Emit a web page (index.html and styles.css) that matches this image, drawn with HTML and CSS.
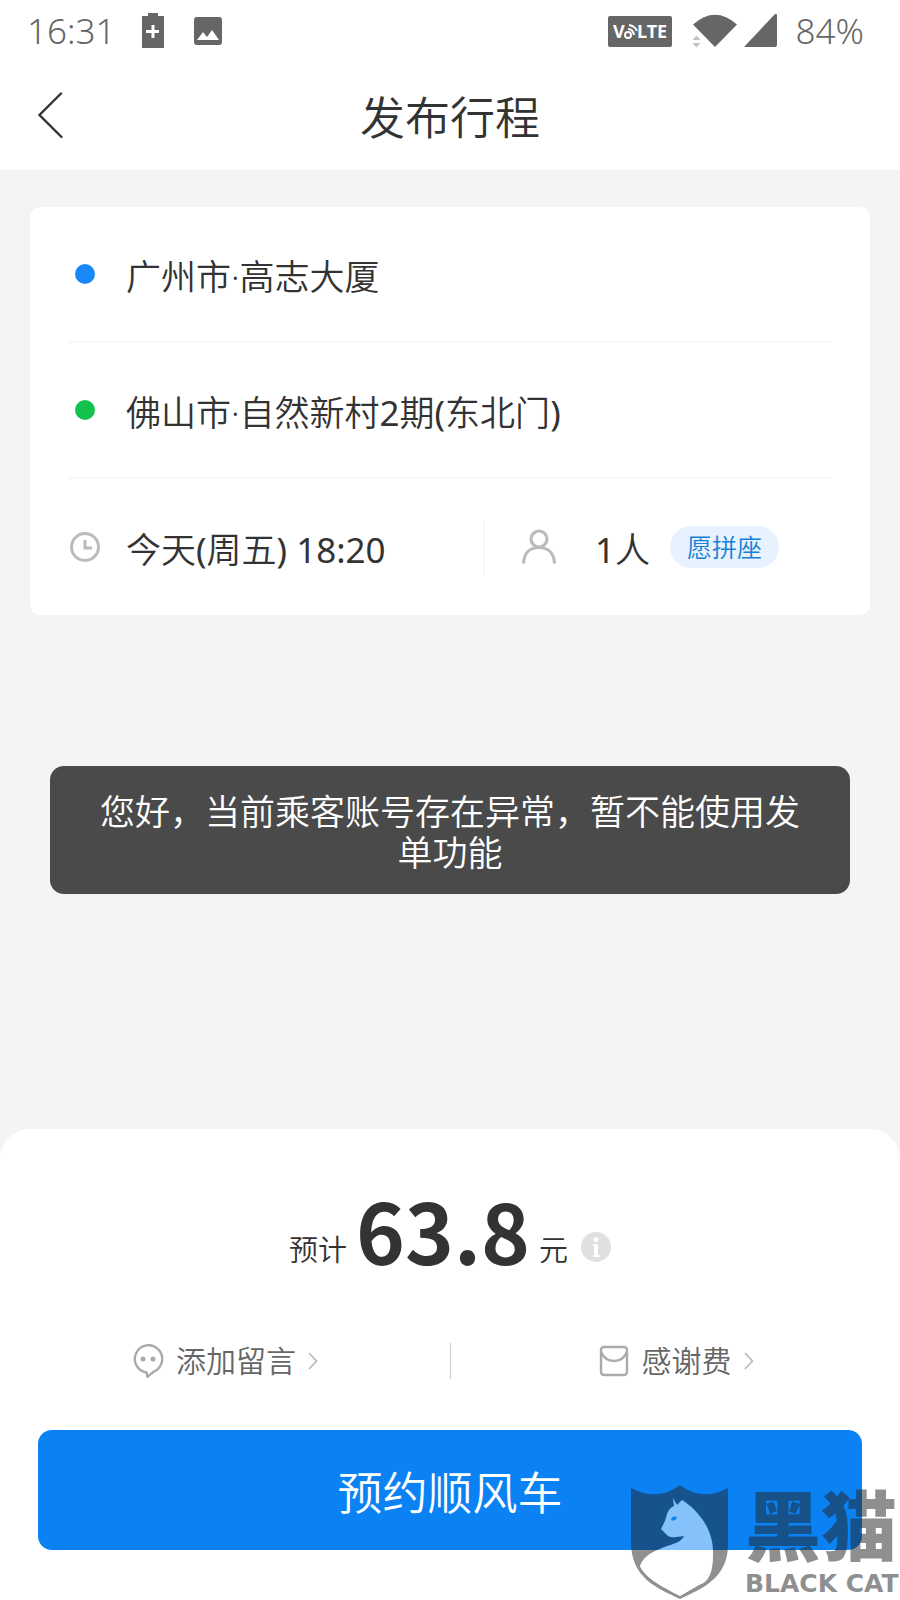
FILE: index.html
```html
<!DOCTYPE html>
<html lang="zh-CN">
<head>
<meta charset="utf-8">
<meta name="viewport" content="width=device-width, initial-scale=1">
<title>发布行程</title>
<link rel="stylesheet" href="styles.css">
</head>
<body>
<div class="page">
  <div class="status">
    <span class="status-time">16:31</span>
    <svg class="icon-battery" width="24" height="36" viewBox="0 0 24 36" aria-hidden="true"><path fill="#666" d="M7 0h10v3h6v32H1V3h6z"/><path stroke="#fff" stroke-width="3" d="M12 12v13M5 18.500h13"/></svg>
    <svg class="icon-image" width="30" height="30" viewBox="0 0 30 30" aria-hidden="true"><rect x="1" y="1" width="28" height="28" rx="3" fill="#666"/><path fill="#fff" d="M4 24l6-8 4 5 5-7 7 10z"/></svg>
    <svg class="icon-volte" width="64" height="31" viewBox="0 0 64 31" role="img" aria-label="VoLTE"><rect width="64" height="31" rx="2" fill="#666"/><g fill="#fff" class="volte-text"><text x="5" y="22">V</text><text x="29" y="22">LTE</text></g><g fill="none" stroke="#fff" stroke-width="2"><circle cx="20" cy="19" r="3"/><path d="M20 13q5 0 6 6M21 9q6 1 8 6"/></g></svg>
    <svg class="icon-wifi" width="46" height="34" viewBox="0 0 46 34" aria-hidden="true"><path fill="#666" d="M1 10.500Q23-9 45 10.500L23 33z"/><path fill="#c4c4c4" stroke="#fff" stroke-width="1" d="M-.5 26.500L4.500 21l5 5.500zM-.5 28.500h10l-5 5.500z"/></svg>
    <svg class="icon-signal" width="34" height="34" viewBox="0 0 34 34" aria-hidden="true"><path fill="#666" d="M0 33L30 1q3-3 3 1v29q0 2-2 2z"/></svg>
    <span>84%</span>
  </div>
  <header class="header">
    <button class="back" type="button" aria-label="返回"><svg width="28" height="50" viewBox="0 0 28 50" aria-hidden="true"><path d="M25 3.500L3.500 25 25.500 47" fill="none" stroke="#333" stroke-width="2.400" stroke-linecap="round"/></svg></button>
    <h1 class="title">发布行程</h1>
  </header>
  <main class="main">
    <section class="card">
      <div class="row"><span class="lead"><i class="dot dot-start"></i></span><span>广州市·高志大厦</span></div>
      <div class="row"><span class="lead"><i class="dot dot-end"></i></span><span>佛山市·自然新村<span class="latin">2</span>期<span class="latin">(</span>东北门<span class="latin">)</span></span></div>
      <div class="row">
        <div class="when">
          <span class="lead"><svg width="32" height="32" viewBox="0 0 32 32" aria-hidden="true"><g fill="none" stroke="#bbb" stroke-width="3"><circle cx="16" cy="16" r="13.500"/><path d="M16 9v8h7"/></g></svg></span>
          <span>今天<span class="latin">(</span>周五<span class="latin">) 18:20</span></span>
        </div>
        <div class="who">
          <svg width="36" height="36" viewBox="0 0 36 36" aria-hidden="true"><g fill="none" stroke="#bbb" stroke-width="3.200"><circle cx="18" cy="10" r="8"/><path d="M2.500 34.500C3 24 9 18.500 18 18.500S33 24 33.500 34.500"/></g></svg>
          <span class="count"><span class="latin">1</span>人</span>
          <span class="tag">愿拼座</span>
        </div>
      </div>
    </section>
  </main>
  <section class="sheet">
    <div class="price">
      <span class="unit">预计</span><strong class="amount">63.8</strong><span class="unit">元</span>
      <button class="info" type="button" aria-label="价格说明"><svg width="30" height="30" viewBox="0 0 30 30" aria-hidden="true"><circle cx="15" cy="15" r="15" fill="#e0e0e0"/><circle cx="15" cy="7.500" r="2.500" fill="#fff"/><path d="M12 12h5v11h2v2h-7v-2h1v-9h-1z" fill="#fff"/></svg></button>
    </div>
    <div class="options">
      <button class="option" type="button">
        <svg width="32" height="36" viewBox="0 0 32 36" aria-hidden="true"><path d="M14.500 29.500A13.700 13.700 0 1 1 22 28.500Q19 30.500 15.500 34z" fill="none" stroke="#aaa" stroke-width="2.400" stroke-linejoin="round"/><g fill="#aaa"><circle cx="11" cy="16" r="2.500"/><circle cx="21" cy="16" r="2.500"/></g></svg>
        <span>添加留言</span>
        <svg width="10" height="18" viewBox="0 0 10 18" aria-hidden="true"><path d="M1 1l7.500 8L1 17" fill="none" stroke="#bbb" stroke-width="1.800"/></svg>
      </button>
      <button class="option option-fee" type="button">
        <svg width="32" height="32" viewBox="0 0 32 32" aria-hidden="true"><g fill="none" stroke="#aaa" stroke-width="2.400"><rect x="3" y="2" width="26" height="28" rx="3"/><path d="M3 7q4 9 13 9t13-9"/></g></svg>
        <span>感谢费</span>
        <svg width="10" height="18" viewBox="0 0 10 18" aria-hidden="true"><path d="M1 1l7.500 8L1 17" fill="none" stroke="#bbb" stroke-width="1.800"/></svg>
      </button>
    </div>
    <button class="submit" type="button">预约顺风车</button>
  </section>
  <div class="toast" role="alert">您好，当前乘客账号存在异常，暂不能使用发单功能</div>
  <div class="watermark">
    <svg width="98" height="116" viewBox="0 0 98 116" aria-hidden="true">
      <path fill="#222" fill-opacity=".5" fill-rule="evenodd" d="M0 4Q27 18 49 1 71 18 97 4V58C98 94 72 104 49 115 26 104 0 94 0 58zM42 14L46 21 51 16C64 24 83 43 82 70 82 88 78 98 68 101L49 112C32 103 15 95 9 82 15 66 37 63 47 58Q52 55 53 52C43 53 39 55 35 50L30 45 34 37 36 30Q39 23 43 22z"/>
      <path fill="#fff" fill-opacity=".5" fill-rule="evenodd" d="M42 14L46 21 51 16C64 24 83 43 82 70 82 88 78 98 68 101L49 112C32 103 15 95 9 82 15 66 37 63 47 58Q52 55 53 52C43 53 39 55 35 50L30 45 34 37 36 30Q39 23 43 22zM40 36Q41 31 46 33 45 38 40 36z"/>
    </svg>
    <div class="brand"><span class="brand-cn">黑猫</span><span class="brand-en">BLACK CAT</span></div>
  </div>
</div>
</body>
</html>
```
FILE: styles.css
```css
* { box-sizing: border-box; }
body {
  margin: 0;
  background: #f4f4f4;
  color: #333;
  font-family: "Noto Sans", "Noto Sans CJK SC", sans-serif;
  font-weight: 350;
}
button {
  padding: 0;
  border: 0;
  background: none;
  color: inherit;
  font: inherit;
  cursor: pointer;
}
svg { display: block; flex: none; }
.page {
  position: relative;
  display: flex;
  flex-direction: column;
  min-height: 100vh;
  overflow: hidden;
}
.status {
  display: flex;
  align-items: center;
  height: 62px;
  padding: 0 36px 0 27px;
  background: #fff;
  color: #666;
  font-size: 35px;
  font-weight: 300;
  line-height: 62px;
}
.icon-battery { margin-left: 26px; }
.icon-image { margin-left: 28px; }
.icon-volte { margin-left: auto; }
.volte-text { font: bold 18px "Noto Sans", sans-serif; }
.icon-wifi { margin-left: 20px; overflow: visible; }
.icon-signal { margin: 0 18px 0 6px; }
.header {
  display: grid;
  grid-template-columns: 64px 1fr 64px;
  align-items: center;
  height: 108px;
  padding: 0 0 2px;
  background: #fff;
}
.back { padding-left: 36px; }
.title {
  margin: 0;
  padding-top: 6px;
  font-size: 45px;
  font-weight: 350;
  line-height: 64px;
  text-align: center;
}
.main { flex: 1; padding: 37px 30px; }
.card {
  padding: 0 38px;
  border-radius: 10px;
  background: #fff;
  font-size: 35px;
}
.row {
  display: flex;
  align-items: center;
  height: 136px;
  border-bottom: 2px solid #f7f7f7;
}
.row:last-child { border-bottom: 0; }
.latin { font-weight: 400; }
.lead { display: flex; flex: none; justify-content: center; width: 34px; margin-right: 24px; }
.dot { width: 20px; height: 20px; border-radius: 50%; }
.dot-start { background: #1989fa; }
.dot-end { background: #12c24c; }
.when { display: flex; align-items: center; width: 415px; }
.who {
  display: flex;
  align-items: center;
  height: 54px;
  padding-left: 36px;
  border-left: 2px solid #f7f7f7;
}
.count { margin-left: 38px; }
.tag {
  margin-left: 20px;
  padding: 0 17px;
  border-radius: 21px;
  background: #e7f2fe;
  color: #1681d8;
  font-size: 25px;
  line-height: 42px;
}
.toast {
  position: absolute;
  top: 766px;
  left: 50px;
  right: 50px;
  padding: 25px 48px 21px;
  border-radius: 14px;
  background: #4a4a4a;
  color: #fff;
  font-size: 35px;
  line-height: 41px;
  text-align: center;
}
.sheet {
  padding: 50px 38px 50px;
  border-radius: 30px 30px 0 0;
  background: #fff;
}
.price {
  display: flex;
  align-items: flex-start;
  justify-content: center;
  height: 100px;
  line-height: 100px;
}
.unit { margin-top: 21px; font-size: 29px; }
.amount {
  margin: 0 9px;
  font-family: "Noto Sans CJK SC", sans-serif;
  font-size: 83px;
  font-weight: 700;
}
.info { margin: 53px 0 0 13px; line-height: 0; }
.options {
  display: grid;
  grid-template-columns: 1fr 1fr;
  height: 30px;
  margin: 64px 0 57px;
  color: #666;
  font-size: 30px;
  line-height: 30px;
}
.option {
  display: flex;
  align-items: center;
  justify-content: center;
  gap: 12px;
  padding-right: 38px;
}
.option-fee { padding: 0 0 0 38px; border-left: 1px solid #ccc; }
.submit {
  display: block;
  width: 100%;
  height: 120px;
  border-radius: 14px;
  background: #0b82f4;
  color: #fff;
  font-size: 45px;
}
.watermark {
  position: absolute;
  right: 2px;
  bottom: 0;
  display: flex;
  align-items: flex-end;
  gap: 16px;
  pointer-events: none;
}
.brand {
  display: flex;
  flex-direction: column;
  gap: 4px;
  width: 153px;
  color: #222;
  opacity: .5;
  font-weight: 900;
}
.brand-cn { font-size: 76px; line-height: 76px; }
.brand-en { font: bold 25px/32px "DejaVu Sans", sans-serif; white-space: nowrap; }
```
